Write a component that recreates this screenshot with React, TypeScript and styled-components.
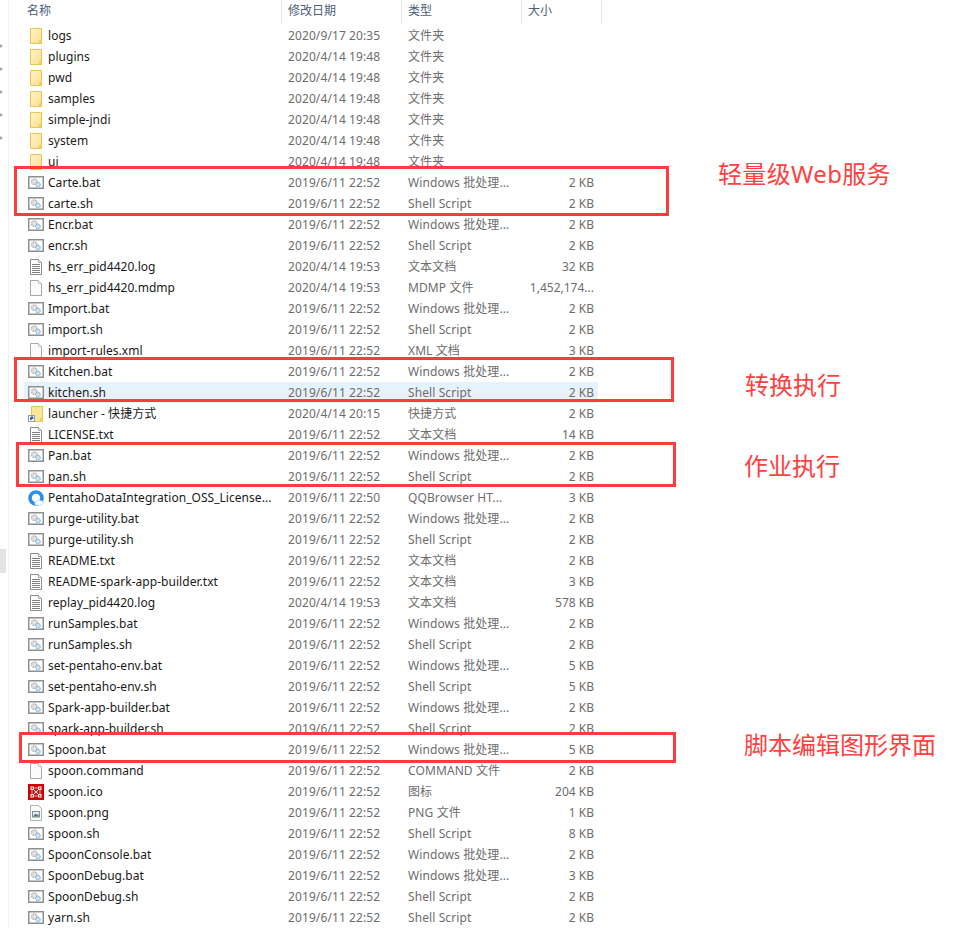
import React from "react";
import styled, { createGlobalStyle } from "styled-components";

const Global = createGlobalStyle`
  html, body { margin: 0; padding: 0; background: #fff; }
  body { font-family: "Noto Sans", "Noto Sans CJK SC", sans-serif; }
`;

const Page = styled.div`
  position: relative;
  display: flex;
  width: 953px;
  height: 939px;
  overflow: hidden;
  background: #fff;
`;

const Sidebar = styled.aside`
  position: relative;
  box-sizing: border-box;
  width: 9px;
  height: 928px;
  border-right: 1px solid #f0f0f0;
  display: flex;
  flex-direction: column;
  align-items: flex-start;
`;

const Arrows = styled.div`
  display: flex;
  flex-direction: column;
  gap: 19px;
  padding-top: 44px;
`;

const Arrow = styled.span`
  display: block;
  width: 0;
  height: 0;
  border-top: 2.5px solid transparent;
  border-bottom: 2.5px solid transparent;
  border-left: 3px solid #a6a6a6;
`;

const ScrollThumb = styled.div`
  width: 6px;
  height: 24px;
  margin-top: 409px;
  background: #e3e3e3;
`;

const Pane = styled.main`
  padding-left: 15px;
  display: flex;
  flex-direction: column;
  align-items: flex-start;
`;

const Header = styled.div`
  display: grid;
  grid-template-columns: 258px 120px 120px 80px;
  height: 25px;
`;

const HeadCell = styled.div<{ $pad: number }>`
  box-sizing: border-box;
  height: 24px;
  padding: 2px 0 0 ${(p) => p.$pad}px;
  line-height: 17px;
  font-size: 12px;
  color: #4c607a;
  border-right: 1px solid #e5e5e5;
`;

const Row = styled.div<{ $selected?: boolean }>`
  display: grid;
  grid-template-columns: 258px 120px 120px 76px;
  align-items: center;
  width: 574px;
  height: 21px;
  font-size: 12px;
  line-height: 17px;
  background: ${(p) => (p.$selected ? "#e5f3ff" : "transparent")};
`;

const NameCell = styled.div`
  display: flex;
  align-items: center;
  padding-left: 4px;
  gap: 4px;
  color: #1a1a1a;
  white-space: nowrap;
  letter-spacing: 0.04px;
`;

const IconSlot = styled.span`
  display: block;
  width: 16px;
  height: 16px;
  flex: none;
`;

const DateCell = styled.div`
  padding-left: 6px;
  color: #6d6d6d;
  white-space: nowrap;
  letter-spacing: 0.1px;
`;

const TypeCell = styled(DateCell)``;

const SizeCell = styled.div`
  text-align: right;
  padding-right: 4px;
  color: #6d6d6d;
  white-space: nowrap;
`;

const Highlight = styled.div<{ $l: number; $t: number; $w: number; $h: number }>`
  position: absolute;
  box-sizing: border-box;
  left: ${(p) => p.$l}px;
  top: ${(p) => p.$t}px;
  width: ${(p) => p.$w}px;
  height: ${(p) => p.$h}px;
  border: 3px solid #ff3b3b;
  pointer-events: none;
`;

const Note = styled.div<{ $l: number; $t: number; $spread?: number }>`
  position: absolute;
  left: ${(p) => p.$l}px;
  top: ${(p) => p.$t}px;
  font-size: 24px;
  line-height: 32px;
  color: #ff4040;
  white-space: nowrap;
  letter-spacing: ${(p) => p.$spread ?? 0}px;
`;

const Folder = () => (
  <svg width="16" height="16" viewBox="0 0 16 16">
    <defs>
      <linearGradient id="fg" x1="0" y1="0" x2="1" y2="1">
        <stop offset="0" stopColor="#fef3cb" />
        <stop offset="1" stopColor="#fbe08a" />
      </linearGradient>
    </defs>
    <path d="M2.5.5h11v15h-11z" fill="url(#fg)" stroke="#eac556" />
    <path d="M11.5 15.5v-3l2-1v4z" fill="#f5cf60" stroke="#eac556" strokeWidth=".6" />
  </svg>
);

const Gears = () => (
  <svg width="16" height="16" viewBox="0 0 16 16">
    <rect x=".75" y="1.75" width="14.5" height="11.5" fill="#fff" stroke="#8f8f8f" strokeWidth="1.5" />
    <rect x="12" y="2" width="2" height="1" fill="#d0d0d0" />
    <circle cx="6.3" cy="6.6" r="2.7" fill="#ececec" stroke="#a9a9a9" strokeWidth="1.3" strokeDasharray="1.6 .6" />
    <circle cx="6.3" cy="6.6" r=".9" fill="#fff" stroke="#bdbdbd" strokeWidth=".5" />
    <circle cx="10" cy="9.6" r="2.2" fill="#c4e2f4" stroke="#86b9da" strokeWidth="1.1" strokeDasharray="1.4 .5" />
    <circle cx="10" cy="9.6" r=".7" fill="#f1f9fd" />
  </svg>
);

const Blank = () => (
  <svg width="16" height="16" viewBox="0 0 16 16">
    <path d="M2.5.5h8l3 3v12h-11z" fill="#fbfbfb" stroke="#a9a9a9" />
    <path d="M10.5.5v3h3" fill="#fff" stroke="#c4c4c4" />
  </svg>
);

const TextDoc = () => (
  <svg width="16" height="16" viewBox="0 0 16 16">
    <path d="M2.5.5h8l3 3v12h-11z" fill="#fff" stroke="#8e8e8e" />
    <path d="M10.5.5v3h3" fill="#fff" stroke="#9f9f9f" />
    <path d="M4 5.5h8M4 7.5h8M4 9.5h8M4 11.5h8M4 13.5h8" stroke="#7f7f7f" />
  </svg>
);

const PngDoc = () => (
  <svg width="16" height="16" viewBox="0 0 16 16">
    <path d="M2.5.5h8l3 3v12h-11z" fill="#fafafa" stroke="#b0b0b0" />
    <rect x="4.5" y="6.5" width="7" height="5.5" fill="#e4edf2" stroke="#8a8a8a" />
    <path d="M5 11.5l2.5-3L9 10l1-1 1 2.5z" fill="#3a7896" />
  </svg>
);

const IcoFile = () => (
  <svg width="16" height="16" viewBox="0 0 16 16">
    <rect width="16" height="16" fill="#c80404" />
    <path d="M5.5 5.5l5 5M10.5 5.5l-5 5M4 6v4M12 6v4M6 4h4M6 12h4" stroke="#f6c4c4" strokeWidth=".9" />
    <g fill="none" stroke="#fff" strokeWidth="1">
      <rect x="3" y="3" width="2.4" height="2.4" />
      <rect x="10.6" y="3" width="2.4" height="2.4" />
      <rect x="3" y="10.6" width="2.4" height="2.4" />
      <rect x="10.6" y="10.6" width="2.4" height="2.4" />
    </g>
    <rect x="6.8" y="6.8" width="2.4" height="2.4" fill="#fff" />
  </svg>
);

const QQ = () => (
  <svg width="16" height="16" viewBox="0 0 16 16">
    <circle cx="8" cy="8" r="6" fill="#fff" stroke="#2a8fe8" strokeWidth="3.6" />
    <path d="M8 15c-1.6 0-1.7-2.8.4-3 .5-1.6 2.8-2.4 4.2-1.3 1.4-.2 2.9.8 2.7 2.3-.1 1.1-1 2-2.2 2z" fill="#fff" stroke="#a9d5f8" strokeWidth=".7" />
  </svg>
);

const Shortcut = () => (
  <svg width="16" height="16" viewBox="0 0 16 16">
    <path d="M3.5.5h11v15h-11z" fill="#fbe596" stroke="#eac556" />
    <path d="M12.5 15.5v-3l2-1v4z" fill="#f5cf60" stroke="#eac556" strokeWidth=".6" />
    <rect x=".5" y="9.5" width="6" height="6" fill="#fff" stroke="#9a9a9a" />
    <path d="M2 14v-2.5h1L2.3 10.6h3v3l-.9-.8L3.2 14z" fill="#1f5fb4" />
  </svg>
);

const icons = { f: Folder, g: Gears, b: Blank, t: TextDoc, p: PngDoc, i: IcoFile, q: QQ, s: Shortcut };
type IconKey = keyof typeof icons;

const D = "2019/6/11 22:52";
const W = "Windows 批处理...";
const S = "Shell Script";
const T = "文本文档";
const F = "2020/4/14 19:48";
const L = "2020/4/14 19:53";

const files: [IconKey, string, string, string, string][] = [
  ["f", "logs", "2020/9/17 20:35", "文件夹", ""],
  ["f", "plugins", F, "文件夹", ""],
  ["f", "pwd", F, "文件夹", ""],
  ["f", "samples", F, "文件夹", ""],
  ["f", "simple-jndi", F, "文件夹", ""],
  ["f", "system", F, "文件夹", ""],
  ["f", "ui", F, "文件夹", ""],
  ["g", "Carte.bat", D, W, "2 KB"],
  ["g", "carte.sh", D, S, "2 KB"],
  ["g", "Encr.bat", D, W, "2 KB"],
  ["g", "encr.sh", D, S, "2 KB"],
  ["t", "hs_err_pid4420.log", L, T, "32 KB"],
  ["b", "hs_err_pid4420.mdmp", L, "MDMP 文件", "1,452,174..."],
  ["g", "Import.bat", D, W, "2 KB"],
  ["g", "import.sh", D, S, "2 KB"],
  ["b", "import-rules.xml", D, "XML 文档", "3 KB"],
  ["g", "Kitchen.bat", D, W, "2 KB"],
  ["g", "kitchen.sh", D, S, "2 KB"],
  ["s", "launcher - 快捷方式", "2020/4/14 20:15", "快捷方式", "2 KB"],
  ["t", "LICENSE.txt", D, T, "14 KB"],
  ["g", "Pan.bat", D, W, "2 KB"],
  ["g", "pan.sh", D, S, "2 KB"],
  ["q", "PentahoDataIntegration_OSS_License...", "2019/6/11 22:50", "QQBrowser HT...", "3 KB"],
  ["g", "purge-utility.bat", D, W, "2 KB"],
  ["g", "purge-utility.sh", D, S, "2 KB"],
  ["t", "README.txt", D, T, "2 KB"],
  ["t", "README-spark-app-builder.txt", D, T, "3 KB"],
  ["t", "replay_pid4420.log", L, T, "578 KB"],
  ["g", "runSamples.bat", D, W, "2 KB"],
  ["g", "runSamples.sh", D, S, "2 KB"],
  ["g", "set-pentaho-env.bat", D, W, "5 KB"],
  ["g", "set-pentaho-env.sh", D, S, "5 KB"],
  ["g", "Spark-app-builder.bat", D, W, "2 KB"],
  ["g", "spark-app-builder.sh", D, S, "2 KB"],
  ["g", "Spoon.bat", D, W, "5 KB"],
  ["b", "spoon.command", D, "COMMAND 文件", "2 KB"],
  ["i", "spoon.ico", D, "图标", "204 KB"],
  ["p", "spoon.png", D, "PNG 文件", "1 KB"],
  ["g", "spoon.sh", D, S, "8 KB"],
  ["g", "SpoonConsole.bat", D, W, "2 KB"],
  ["g", "SpoonDebug.bat", D, W, "3 KB"],
  ["g", "SpoonDebug.sh", D, S, "2 KB"],
  ["g", "yarn.sh", D, S, "2 KB"],
];

export default function App() {
  return (
    <Page>
      <Global />
      <Sidebar>
        <Arrows>
          {[0, 1, 2, 3, 4].map((n) => (
            <Arrow key={n} />
          ))}
        </Arrows>
        <ScrollThumb />
      </Sidebar>
      <Pane>
        <Header>
          <HeadCell $pad={3}>名称</HeadCell>
          <HeadCell $pad={6}>修改日期</HeadCell>
          <HeadCell $pad={6}>类型</HeadCell>
          <HeadCell $pad={6}>大小</HeadCell>
        </Header>
        {files.map(([icon, name, date, type, size]) => {
          const Icon = icons[icon];
          return (
            <Row key={name} $selected={name === "kitchen.sh"}>
              <NameCell>
                <IconSlot>
                  <Icon />
                </IconSlot>
                {name}
              </NameCell>
              <DateCell>{date}</DateCell>
              <TypeCell>{type}</TypeCell>
              <SizeCell>{size}</SizeCell>
            </Row>
          );
        })}
      </Pane>
      <Highlight $l={14} $t={166} $w={655} $h={50} />
      <Highlight $l={14} $t={357} $w={660} $h={45} />
      <Highlight $l={16} $t={442} $w={660} $h={45} />
      <Highlight $l={19} $t={732} $w={657} $h={31} />
      <Note $l={718} $t={158} $spread={0.35}>轻量级Web服务</Note>
      <Note $l={745} $t={369}>转换执行</Note>
      <Note $l={744} $t={450}>作业执行</Note>
      <Note $l={744} $t={729}>脚本编辑图形界面</Note>
    </Page>
  );
}
